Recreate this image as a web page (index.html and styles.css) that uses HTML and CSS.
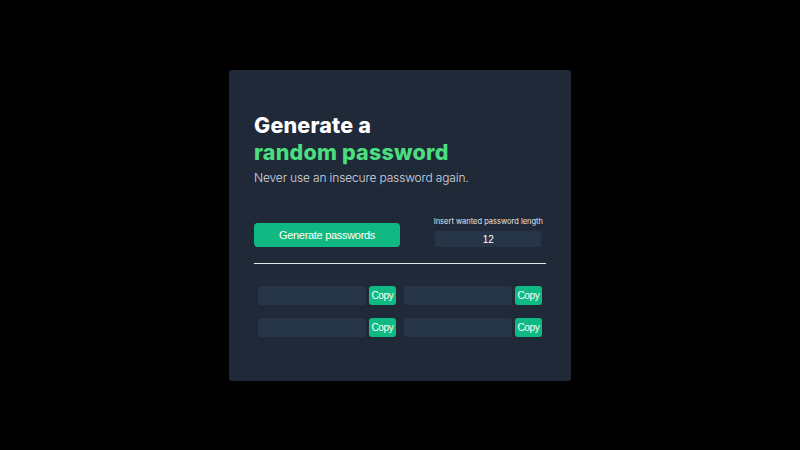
FILE: index.html
```html
<!DOCTYPE html>
<html lang="en">
<head>
    <meta charset="UTF-8">
    <meta name="viewport" content="width=device-width, initial-scale=1.0">
    <title>Password Generator</title>
    <link rel="stylesheet" href="styles.css">
</head>
<body>

    <!-- Generator Card -->
    <main class="card">
        <h1>Generate a<br><span class="green">random password</span></h1>
        <p class="subtitle">Never use an insecure password again.</p>

        <!-- Controls -->
        <div class="controls">
            <button class="generate-btn">Generate passwords</button>
            <div class="length-box">
                <label for="length">Insert wanted password length</label>
                <input id="length" type="text" value="12">
            </div>
        </div>

        <hr class="divider">

        <!-- Output Fields -->
        <section class="results">
            <div class="result"><input type="text" readonly><button class="copy-btn">Copy</button></div>
            <div class="result"><input type="text" readonly><button class="copy-btn">Copy</button></div>
            <div class="result"><input type="text" readonly><button class="copy-btn">Copy</button></div>
            <div class="result"><input type="text" readonly><button class="copy-btn">Copy</button></div>
        </section>
    </main>

</body>
</html>
```

FILE: styles.css
```css
/* Page */
body {
    margin: 0;
    height: 450px;
    background-color: #000;
    display: flex;
    align-items: center;
    justify-content: center;
    font-family: Inter, "Liberation Sans", sans-serif;
}

/* Card */
.card {
    width: 342px;
    height: 311px;
    box-sizing: border-box;
    padding: 42px 25px 0;
    background-color: #1f2937;
    border-radius: 3px;
    margin-top: 1px;
}

.card h1 {
    margin: 0;
    font-size: 21.5px;
    font-weight: 800;
    line-height: 27px;
    letter-spacing: 0.2px;
    color: #fff;
}

.green {
    color: #4ade80;
}

.subtitle {
    margin: 4px 0 0;
    font-size: 12px;
    font-weight: 300;
    letter-spacing: -0.15px;
    color: #d5d9e0;
}

/* Controls */
.controls {
    display: flex;
    justify-content: space-between;
    align-items: flex-end;
    margin-top: 32px;
}

.generate-btn {
    width: 146px;
    height: 24px;
    border: none;
    border-radius: 4px;
    background-color: #10b981;
    color: #fff;
    font-family: "Liberation Sans", sans-serif;
    font-size: 11px;
    letter-spacing: -0.3px;
    cursor: pointer;
}

.length-box {
    display: flex;
    flex-direction: column;
    align-items: center;
    margin-right: 3px;
}

.length-box label {
    font-size: 7.5px;
    color: #e5e7eb;
    margin-bottom: 5px;
}

.length-box input {
    width: 106px;
    height: 16px;
    box-sizing: border-box;
    border: none;
    border-radius: 2px;
    background-color: #273549;
    color: #fff;
    text-align: center;
    font-family: "Liberation Sans", sans-serif;
    font-size: 10px;
    padding: 0;
}

.divider {
    margin: 16px 0 0;
    border: none;
    border-top: 1.5px solid #e5e7eb;
}

/* Results */
.results {
    display: grid;
    grid-template-columns: minmax(0, 1fr) minmax(0, 1fr);
    column-gap: 8px;
    row-gap: 13px;
    margin: 22px 4px 0;
}

.result {
    display: flex;
    align-items: center;
    gap: 3px;
}

.result input {
    flex: 1;
    width: 0;
    min-width: 0;
    height: 19px;
    box-sizing: border-box;
    border: none;
    border-radius: 3px;
    background-color: #273549;
    padding: 0;
}

.copy-btn {
    width: 27px;
    height: 19px;
    padding: 0;
    border: none;
    border-radius: 3px;
    background-color: #10b981;
    color: #fff;
    font-family: "Liberation Sans", sans-serif;
    font-size: 10px;
    letter-spacing: -0.3px;
    cursor: pointer;
}
```
